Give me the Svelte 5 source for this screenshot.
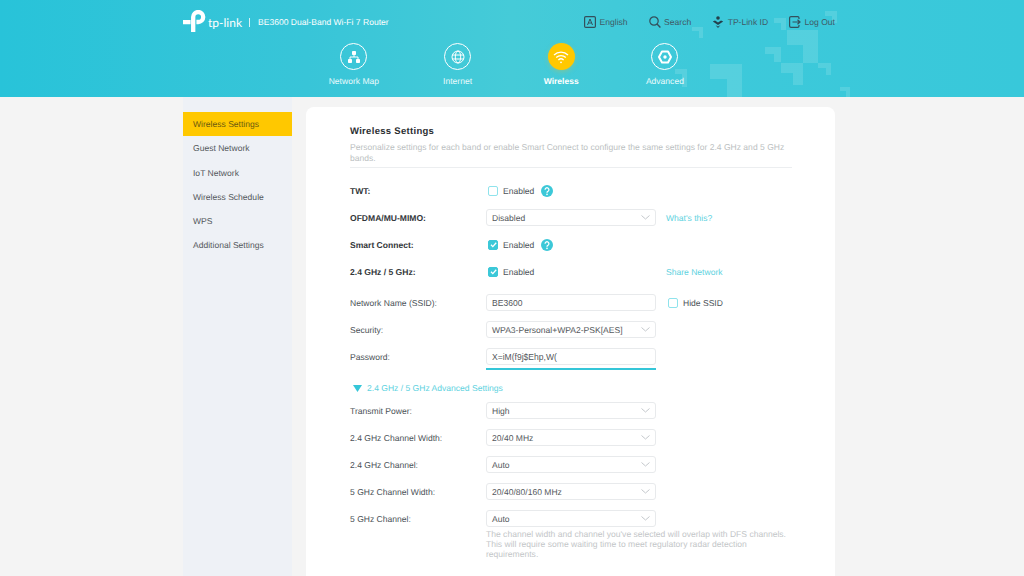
<script>
  const tabs = [
    { id: 'map', label: 'Network Map' },
    { id: 'net', label: 'Internet' },
    { id: 'wifi', label: 'Wireless', active: true },
    { id: 'adv', label: 'Advanced' }
  ];
  const menu = ['Wireless Settings', 'Guest Network', 'IoT Network', 'Wireless Schedule', 'WPS', 'Additional Settings'];
  const advanced = [
    { label: 'Transmit Power:', value: 'High' },
    { label: '2.4 GHz Channel Width:', value: '20/40 MHz' },
    { label: '2.4 GHz Channel:', value: 'Auto' },
    { label: '5 GHz Channel Width:', value: '20/40/80/160 MHz' },
    { label: '5 GHz Channel:', value: 'Auto' }
  ];
  // stepped corners in the header background: x, y, width, height, bar thickness
  const corners = [
    [787, 30, 31, 33, 15], [710, 64, 32, 33, 15], [781, 63, 22, 22, 10], [765, 47, 16, 15, 7],
    [818, 63, 13, 12, 5], [774, 18, 12, 12, 5], [825, 11, 12, 12, 5], [840, 87, 10, 10, 4],
    [692, 27, 11, 11, 4], [675, 69, 12, 18, 5]
  ];
  const cornerPath = ([x, y, w, h, t]) =>
    `M${x} ${y}h${w}v${h}h-${t}v-${h - t}h-${w - t}z`;
</script>

{#snippet check(on)}
  <span class="box" class:on>
    {#if on}
      <svg viewBox="0 0 11 11" width="11" height="11"><path d="M3 5.800l1.800 1.800L8.200 3.800" fill="none" stroke="#fff" stroke-width="1.300"/></svg>
    {/if}
  </span>
{/snippet}

{#snippet help()}
  <svg class="help" viewBox="0 0 12 12" width="12" height="12">
    <circle cx="6" cy="6" r="6" fill="#3cc8d8"/>
    <path d="M4.100 4.700a1.900 1.900 0 1 1 2.900 1.600c-.7.4-1 .7-1 1.400" fill="none" stroke="#fff" stroke-width="1.300"/>
    <circle cx="6" cy="9.400" r=".8" fill="#fff"/>
  </svg>
{/snippet}

{#snippet select(value)}
  <div class="field">
    <span>{value}</span>
    <svg viewBox="0 0 9 5" width="9" height="5"><path d="M.5.5l4 3.500 4-3.500" fill="none" stroke="#c4c8cc" stroke-width="1"/></svg>
  </div>
{/snippet}

<div class="page">
  <header>
    <svg class="pattern" viewBox="0 0 1024 97" width="1024" height="97">
      {#each corners as c}
        <path d={cornerPath(c)} fill="#fff" opacity=".13"/>
      {/each}
    </svg>

    <div class="top">
      <div class="brand">
        <svg viewBox="0 0 23 22" width="23" height="22">
          <path d="M0 12.200h7.600M10.200 22V7a5 5 0 1 1 5 5h-1.800" fill="none" stroke="#fff" stroke-width="4.300"/>
        </svg>
        <span class="logotext">tp-link</span>
        <span class="sep"></span>
        <span class="model">BE3600 Dual-Band Wi-Fi 7 Router</span>
      </div>
      <nav class="tools">
        <span class="tool">
          <svg viewBox="0 0 12 12" width="12" height="12"><rect x=".6" y=".6" width="10.800" height="10.800" rx="1.200" fill="none" stroke="#33505c" stroke-width="1.200"/><path d="M3.500 9L6 3l2.500 6M4.400 7h3.200" fill="none" stroke="#33505c"/></svg>
          English
        </span>
        <span class="tool">
          <svg viewBox="0 0 12 12" width="12" height="12"><circle cx="5" cy="5" r="4.200" fill="none" stroke="#33505c" stroke-width="1.200"/><path d="M8 8l3.400 3.400" stroke="#33505c" stroke-width="1.400"/></svg>
          Search
        </span>
        <span class="tool">
          <svg viewBox="0 0 12 12" width="12" height="12"><circle cx="6" cy="2" r="1.800" fill="#24404c"/><path d="M.8 5.600l2.200-1 3 1.800 3-1.800 2.200 1L6 9zM3.600 9.200L6 10.600l2.400-1.400L6 12z" fill="#24404c"/></svg>
          TP-Link ID
        </span>
        <span class="tool">
          <svg viewBox="0 0 12 12" width="12" height="12"><path d="M10 3V2a1.400 1.400 0 0 0-1.400-1.400H2A1.400 1.400 0 0 0 .6 2v8A1.400 1.400 0 0 0 2 11.400h6.600A1.400 1.400 0 0 0 10 10V9" fill="none" stroke="#33505c" stroke-width="1.200"/><path d="M3.500 6h7.500M8.500 3.800L11 6 8.500 8.200" fill="none" stroke="#33505c" stroke-width="1.200"/></svg>
          Log Out
        </span>
      </nav>
    </div>

    <nav class="tabs">
      {#each tabs as tab}
        <div class="tab" class:active={tab.active}>
          <span class="ring">
            {#if tab.id === 'map'}
              <svg viewBox="0 0 14 14" width="14" height="14"><rect x="5" y="1" width="4" height="4" rx=".8" fill="#fff"/><rect x="1" y="9" width="4" height="4" rx=".8" fill="#fff"/><rect x="9" y="9" width="4" height="4" rx=".8" fill="#fff"/><path d="M7 5v2M3 9V7h8v2" fill="none" stroke="#fff"/></svg>
            {:else if tab.id === 'net'}
              <svg viewBox="0 0 14 14" width="14" height="14" fill="none" stroke="#fff"><circle cx="7" cy="7" r="6"/><ellipse cx="7" cy="7" rx="2.700" ry="6"/><path d="M1 5h12M1 9h12"/></svg>
            {:else if tab.id === 'wifi'}
              <svg viewBox="0 0 16 14" width="16" height="14" fill="none" stroke="#fff" stroke-width="1.300"><path d="M1 5a10 10 0 0 1 14 0M3.200 7.500a7 7 0 0 1 9.600 0M5.400 10a3.800 3.800 0 0 1 5.200 0"/><circle cx="8" cy="12.300" r=".9" fill="#fff" stroke="none"/></svg>
            {:else}
              <svg viewBox="0 0 14 14" width="14" height="14"><path d="M4 1.500h6L13 7l-3 5.500H4L1 7z" fill="none" stroke="#fff" stroke-width="2" stroke-linejoin="round"/><circle cx="7" cy="7" r="1.700" fill="#fff"/></svg>
            {/if}
          </span>
          <span class="tablabel">{tab.label}</span>
        </div>
      {/each}
    </nav>
  </header>

  <div class="body">
    <aside>
      {#each menu as item, i}
        <div class="item" class:current={i === 0}>{item}</div>
      {/each}
    </aside>

    <main>
      <h1>Wireless Settings</h1>
      <p class="intro">Personalize settings for each band or enable Smart Connect to configure the same settings for 2.4 GHz and 5 GHz bands.</p>

      <div class="row first">
        <b>TWT:</b>
        <div class="checkcell">{@render check(false)}<span>Enabled</span>{@render help()}</div>
      </div>
      <div class="row">
        <b>OFDMA/MU-MIMO:</b>
        {@render select('Disabled')}
        <span class="link">What's this?</span>
      </div>
      <div class="row">
        <b>Smart Connect:</b>
        <div class="checkcell">{@render check(true)}<span>Enabled</span>{@render help()}</div>
      </div>
      <div class="row">
        <b>2.4 GHz / 5 GHz:</b>
        <div class="checkcell">{@render check(true)}<span>Enabled</span></div>
        <span class="link">Share Network</span>
      </div>

      <div class="row ssid">
        <label for="ssid">Network Name (SSID):</label>
        <input id="ssid" class="field" value="BE3600" />
        <div class="checkcell hide">{@render check(false)}<span>Hide SSID</span></div>
      </div>
      <div class="row">
        <span class="name">Security:</span>
        {@render select('WPA3-Personal+WPA2-PSK[AES]')}
      </div>
      <div class="row">
        <label for="pw">Password:</label>
        <div class="pw">
          <input id="pw" class="field" value="X=iM(f9j$Ehp,W(" />
        </div>
      </div>

      <div class="advhead">
        <svg viewBox="0 0 9 7" width="9" height="7"><path d="M0 0h9L4.500 7z" fill="#35c6d8"/></svg>
        <span>2.4 GHz / 5 GHz Advanced Settings</span>
      </div>

      {#each advanced as a}
        <div class="row adv">
          <span class="name">{a.label}</span>
          {@render select(a.value)}
        </div>
      {/each}
      <p class="note">The channel width and channel you've selected will overlap with DFS channels. This will require some waiting time to meet regulatory radar detection requirements.</p>
    </main>
  </div>
</div>

<style>
  :global(body) {
    margin: 0;
    background: #f4f4f4;
    overflow: hidden;
  }
  .page {
    height: 576px;
    overflow: hidden;
    font-family: "Liberation Sans", Arial, sans-serif;
    font-size: 8.550px;
    text-rendering: geometricPrecision;
    color: #4b5257;
  }
  header {
    position: relative;
    height: 97px;
    box-sizing: border-box;
    padding: 9px 189px 0 183px;
    background: linear-gradient(90deg, #28c3d9 0%, #38c5d8 30%, #45cbd8 50%, #3dc9da 70%, #38c8da 100%);
  }
  .pattern {
    position: absolute;
    left: 0;
    top: 0;
  }
  .top {
    position: relative;
    display: flex;
    justify-content: space-between;
    align-items: center;
    height: 24px;
  }
  .brand {
    display: flex;
    align-items: center;
    color: #fff;
    white-space: nowrap;
  }
  .logotext {
    margin-left: 2px;
    font-family: Lato, sans-serif;
    font-size: 12px;
    line-height: 14px;
    width: 33px;
    margin-top: 3px;
  }
  .sep {
    width: 1px;
    height: 9px;
    margin: 2px 8px 0 8px;
    background: #d6f3f7;
  }
  .model {
    margin-top: 1px;
  }
  .tools {
    display: flex;
    gap: 21px;
    margin-top: 1px;
  }
  .tool {
    display: flex;
    align-items: center;
    gap: 3.500px;
    color: #3f5a66;
  }
  .tabs {
    position: relative;
    display: grid;
    grid-template-columns: repeat(4, 103.700px);
    margin: 10px 0 0 119px;
  }
  .tab {
    display: flex;
    flex-direction: column;
    align-items: center;
    color: #eafafc;
  }
  .ring {
    box-sizing: border-box;
    width: 27px;
    height: 27px;
    border: 1px solid #fff;
    border-radius: 50%;
    display: flex;
    align-items: center;
    justify-content: center;
  }
  .active .ring {
    border: 0;
    background: #ffc800;
    box-shadow: 0 2px 5px rgba(220, 190, 60, .35);
  }
  .active .tablabel {
    font-weight: 700;
    color: #fff;
  }
  .tablabel {
    margin-top: 6px;
    line-height: 10px;
  }
  .body {
    display: flex;
    padding-left: 183px;
    height: 479px;
    box-sizing: border-box;
  }
  aside {
    width: 109px;
    padding-top: 15px;
    background: #eef1f6;
    flex: none;
  }
  .item {
    height: 24.300px;
    line-height: 24.300px;
    padding-left: 10px;
    color: #54585c;
  }
  .item.current {
    background: #ffc800;
    color: #6b5a10;
  }
  main {
    width: 529px;
    margin: 10px 0 0 14px;
    padding: 19px 43px 0 44px;
    box-sizing: border-box;
    background: #fff;
    border-radius: 8px 8px 0 0;
  }
  h1 {
    margin: 0;
    font-size: 9.500px;
    line-height: 11px;
    font-weight: 700;
    letter-spacing: .3px;
    color: #2c2f33;
  }
  .intro {
    margin: 5px 0 0;
    padding-bottom: 3px;
    line-height: 11px;
    color: #bcbfc2;
    border-bottom: 1px solid #eceef0;
  }
  .row {
    display: grid;
    grid-template-columns: 136px 170px auto;
    align-items: center;
    height: 17px;
    margin-top: 10px;
  }
  .row.first {
    margin-top: 14px;
  }
  .row.ssid {
    margin-top: 14px;
  }
  .row.adv {
    margin-top: 10.100px;
  }
  b {
    font-weight: 700;
    color: #33373a;
  }
  .checkcell {
    display: flex;
    align-items: center;
    gap: 5px;
  }
  .hide {
    margin-left: 10px;
  }
  .box {
    box-sizing: border-box;
    width: 10px;
    height: 10px;
    margin-left: 2px;
    border: 1px solid #8fe3ec;
    border-radius: 2px;
    display: flex;
    align-items: center;
    justify-content: center;
    background: #fff;
  }
  .box.on {
    background: #3cc8d8;
    border-color: #3cc8d8;
  }
  .box svg {
    flex: none;
  }
  .help {
    margin-left: 2px;
  }
  .field {
    box-sizing: border-box;
    width: 170px;
    height: 17px;
    padding: 0 5px;
    display: flex;
    align-items: center;
    justify-content: space-between;
    border: 1px solid #e8eaec;
    border-radius: 3px;
    background: #fff;
    font: inherit;
    color: #54585c;
    outline: none;
  }
  .pw {
    position: relative;
    height: 17px;
  }
  .pw::after {
    content: '';
    position: absolute;
    left: 0;
    right: 0;
    top: 20px;
    height: 2px;
    background: #35c6d8;
  }
  .link {
    margin-left: 10px;
    color: #5ed2e0;
  }
  .advhead {
    display: flex;
    align-items: center;
    gap: 5px;
    height: 12px;
    margin: 17px 0 0 3px;
    color: #5ed2e0;
  }
  .advhead + .row {
    margin-top: 8px;
  }
  .note {
    margin: 2px 0 0 136px;
    line-height: 10px;
    width: 305px;
    color: #c3c6c8;
  }
</style>
